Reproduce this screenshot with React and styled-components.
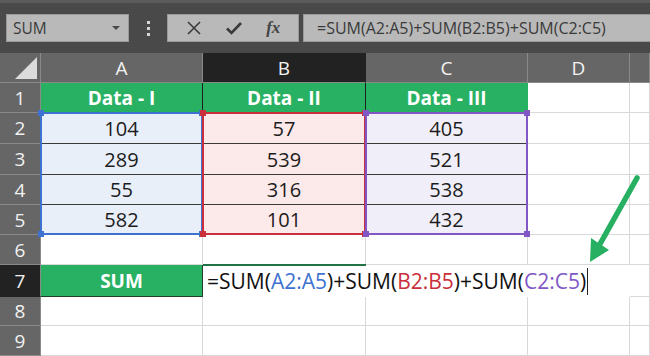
import React from 'react';
import styled, { createGlobalStyle } from 'styled-components';

const GlobalStyle = createGlobalStyle`
  html, body {
    margin: 0;
    padding: 0;
    background: #ffffff;
  }
  * {
    box-sizing: border-box;
  }
`;

const GREEN = '#28b163';
const GRID = '#d9d9d9';

const Page = styled.div`
  position: relative;
  width: 650px;
  height: 356px;
  overflow: hidden;
  font-family: 'Open Sans', 'Noto Sans', sans-serif;
  background: #fff;
`;

const TopBar = styled.div`
  height: 53px;
  background: #494949;
  border-top: 3px solid #5b5b5b;
  display: flex;
  align-items: center;
  padding: 0 0 0 6px;
`;

const Box = styled.div`
  height: 28px;
  background: #b9b9b9;
  border: 1px solid #9a9a9a;
  display: flex;
  align-items: center;
`;

const NameBox = styled(Box)`
  width: 123px;
  padding: 0 8px 0 6px;
  justify-content: space-between;
  font-size: 15.5px;
  color: #3b3b3b;
`;

const Caret = styled.span`
  width: 0;
  height: 0;
  border-left: 4px solid transparent;
  border-right: 4px solid transparent;
  border-top: 4px solid #4a4a4a;
`;

const Grip = styled.div`
  width: 38px;
  display: flex;
  flex-direction: column;
  align-items: center;
  gap: 3px;
  span {
    width: 3px;
    height: 3px;
    background: #d6d6d6;
  }
`;

const FxGroup = styled(Box)`
  width: 132px;
  justify-content: space-around;
  padding: 0 6px;
  color: #3a3a3a;
`;

const FxText = styled.span`
  font-family: 'Liberation Serif', 'DejaVu Serif', serif;
  font-style: italic;
  font-size: 17px;
  font-weight: bold;
  color: #444;
`;

const FormulaBox = styled(Box)`
  flex: 1;
  margin-left: 4px;
  border-right: none;
  padding-left: 13px;
  font-size: 16px;
  color: #3a3a3a;
`;

const Sheet = styled.div`
  display: grid;
  grid-template-columns: 41px 162px 163px 162px 102px 20px;
  grid-template-rows: 30px 30px 31px 31px 30px 30px 30px 32px 29px 30px;
`;

const Corner = styled.div`
  grid-row: 1;
  grid-column: 1;
  background: #666666;
  border-right: 1px solid #8a8a8a;
  border-bottom: 1px solid #8a8a8a;
  position: relative;
  &::after {
    content: '';
    position: absolute;
    right: 3px;
    bottom: 3px;
    width: 0;
    height: 0;
    border-left: 22px solid transparent;
    border-bottom: 22px solid #dcdcdc;
  }
`;

const Header = styled.div`
  grid-row: ${(p) => p.$r};
  grid-column: ${(p) => p.$c};
  background: ${(p) => (p.$active ? '#222222' : '#666666')};
  color: #f2f2f2;
  font-size: 19px;
  display: flex;
  align-items: center;
  justify-content: center;
  border-right: 1px solid ${(p) => (p.$active && p.$r === 1 ? '#222222' : '#8a8a8a')};
  border-bottom: 1px solid ${(p) => (p.$active && p.$c === 1 ? '#222222' : '#8a8a8a')};
`;

const Cell = styled.div`
  grid-row: ${(p) => p.$r};
  grid-column: ${(p) => p.$c};
  background: ${(p) => p.$fill || '#fff'};
  border-right: 1px solid ${(p) => p.$right || GRID};
  border-bottom: 1px solid ${(p) => p.$bottom || GRID};
  display: flex;
  align-items: center;
  justify-content: center;
  font-size: ${(p) => (p.$head ? '19px' : '20px')};
  font-weight: ${(p) => (p.$head ? 700 : 400)};
  color: ${(p) => (p.$head ? '#ffffff' : '#1c1c1c')};
`;

const Range = styled.div`
  grid-column: ${(p) => p.$col} / span 1;
  grid-row: 3 / 7;
  margin: -1px 0 0 -1px;
  border: 2px solid ${(p) => p.$color};
  position: relative;
  pointer-events: none;
  z-index: 2;
`;

const Handle = styled.span`
  position: absolute;
  width: 6px;
  height: 6px;
  background: ${(p) => p.$color};
  ${(p) => (p.$top ? 'top: -4px;' : 'bottom: -4px;')}
  ${(p) => (p.$left ? 'left: -4px;' : 'right: -4px;')}
`;

const Editor = styled.div`
  grid-column: 3 / 6;
  grid-row: 8 / 9;
  background: #fff;
  z-index: 3;
  display: flex;
  align-items: center;
  padding-left: 4px;
  font-size: 21px;
  color: #111;
  white-space: pre;
`;

const ActiveMark = styled.div`
  grid-column: 3 / 4;
  grid-row: 8 / 9;
  align-self: start;
  height: 2px;
  margin-top: -1px;
  background: #217346;
  z-index: 4;
`;

const Ref = styled.span`
  color: ${(p) => p.$color};
`;

const Cursor = styled.span`
  display: inline-block;
  width: 1px;
  height: 27px;
  background: #222;
  margin-left: 1px;
`;

const ArrowLayer = styled.svg`
  position: absolute;
  left: 0;
  top: 0;
  pointer-events: none;
  z-index: 10;
`;

const cols = ['A', 'B', 'C', 'D', ''];
const data = [
  [104, 57, 405],
  [289, 539, 521],
  [55, 316, 538],
  [582, 101, 432],
];
const fills = ['#e9eff9', '#fce9e9', '#f0eef8'];
const ranges = [
  { col: 2, color: '#3d72d0' },
  { col: 3, color: '#c9303b' },
  { col: 4, color: '#8157c6' },
];

function renderRow(r) {
  const gr = r + 1;
  const cells = [];
  for (let c = 0; c < 5; c++) {
    const key = `${r}-${c}`;
    const gc = c + 2;
    if (r === 1 && c < 3) {
      cells.push(
        <Cell key={key} $r={gr} $c={gc} $fill={GREEN} $head $right={c < 2 ? '#1e1e1e' : GREEN} $bottom={GREEN}>
          {['Data - I', 'Data - II', 'Data - III'][c]}
        </Cell>
      );
    } else if (r >= 2 && r <= 5 && c < 3) {
      cells.push(
        <Cell key={key} $r={gr} $c={gc} $fill={fills[c]} $bottom={r < 5 ? '#3a3a3a' : undefined}>
          {data[r - 2][c]}
        </Cell>
      );
    } else if (r === 7 && c === 0) {
      cells.push(
        <Cell key={key} $r={gr} $c={gc} $fill={GREEN} $head $right="#1f3f2a" $bottom="#1f3f2a">
          SUM
        </Cell>
      );
    } else {
      cells.push(<Cell key={key} $r={gr} $c={gc} />);
    }
  }
  return cells;
}

export default function App() {
  return (
    <Page>
      <GlobalStyle />
      <TopBar>
        <NameBox>
          SUM
          <Caret />
        </NameBox>
        <Grip>
          <span />
          <span />
          <span />
        </Grip>
        <FxGroup>
          <svg width="16" height="16" viewBox="0 0 16 16">
            <path d="M2 2 L14 14 M14 2 L2 14" stroke="#3a3a3a" strokeWidth="1.6" fill="none" />
          </svg>
          <svg width="18" height="16" viewBox="0 0 18 16">
            <path d="M2 8.5 L6.5 13 L16 3" stroke="#3a3a3a" strokeWidth="2.6" fill="none" />
          </svg>
          <FxText>fx</FxText>
        </FxGroup>
        <FormulaBox>=SUM(A2:A5)+SUM(B2:B5)+SUM(C2:C5)</FormulaBox>
      </TopBar>
      <Sheet>
        <Corner />
        {cols.map((c, i) => (
          <Header key={`h${i}`} $r={1} $c={i + 2} $active={c === 'B'}>
            {c}
          </Header>
        ))}
        {[1, 2, 3, 4, 5, 6, 7, 8, 9].map((r) => (
          <React.Fragment key={r}>
            <Header $r={r + 1} $c={1} $active={r === 7}>
              {r}
            </Header>
            {renderRow(r)}
          </React.Fragment>
        ))}
        {ranges.map((rg) => (
          <Range key={rg.col} $col={rg.col} $color={rg.color}>
            <Handle $color={rg.color} $top $left />
            <Handle $color={rg.color} $top />
            <Handle $color={rg.color} $left />
            <Handle $color={rg.color} />
          </Range>
        ))}
        <Editor>
          =SUM(<Ref $color="#3d72d0">A2:A5</Ref>)+SUM(<Ref $color="#c9303b">B2:B5</Ref>)+SUM(<Ref $color="#8157c6">C2:C5</Ref>)
          <Cursor />
        </Editor>
        <ActiveMark />
      </Sheet>
      <ArrowLayer width="650" height="356" viewBox="0 0 650 356">
        <line x1="637" y1="178" x2="600" y2="244" stroke="#27b061" strokeWidth="5.5" strokeLinecap="round" />
        <polygon points="590,262 591,238 609,250" fill="#27b061" />
      </ArrowLayer>
    </Page>
  );
}
